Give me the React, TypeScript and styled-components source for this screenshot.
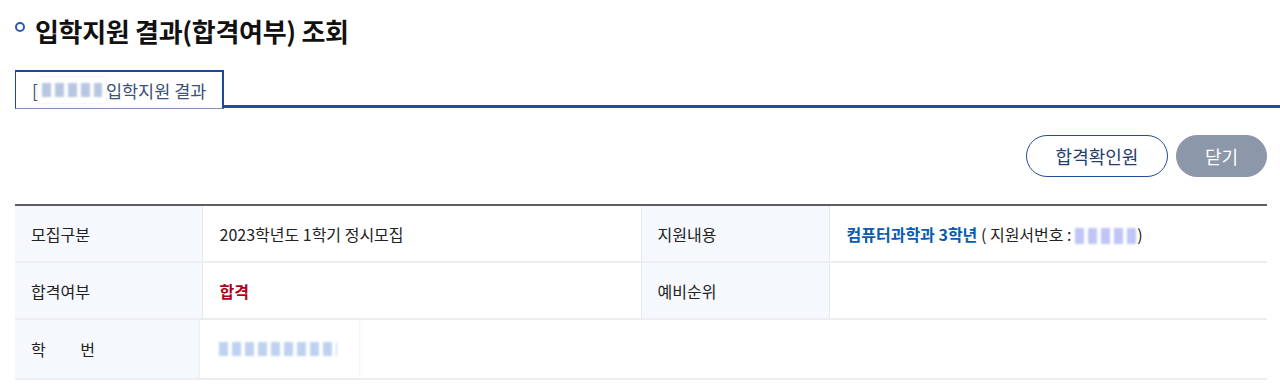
import styled, { createGlobalStyle } from "styled-components";

const GlobalStyle = createGlobalStyle`
  html, body { margin: 0; padding: 0; background: #fff; }
  body {
    font-family: "Noto Sans CJK KR", "Noto Sans", sans-serif;
    color: #222;
  }
`;

/* ── Layout ──────────────────────────────────────────── */

const Page = styled.div`
  padding: 0 13px 0 15px;
  overflow: hidden;
`;

const TitleRow = styled.div`
  display: flex;
  align-items: center;
  gap: 10px;
  height: 60px;
  margin-bottom: 10px;
`;

const Bullet = styled.span`
  width: 6px;
  height: 6px;
  border: 2px solid #2a5bb0;
  border-radius: 50%;
  margin-left: 0;
  margin-top: -6px;
`;

const Title = styled.h2`
  margin: 0;
  font-size: 26px;
  font-weight: 700;
  letter-spacing: -0.3px;
  color: #111;
`;

/* ── Tabs ────────────────────────────────────────────── */

const TabBar = styled.div`
  display: flex;
  align-items: flex-end;
  margin-right: -13px;
`;

const Tab = styled.div`
  width: 209px;
  height: 39px;
  box-sizing: border-box;
  border: 2px solid #1c4a95;
  border-left-width: 1.5px;
  border-bottom: 1px solid #7e93b8;
  display: flex;
  align-items: center;
  padding-left: 16px;
  margin-bottom: -1px;
  font-size: 17.5px;
  color: #3a5278;
  background: #fff;
`;

const TabLine = styled.div`
  flex: 1;
  height: 3px;
  background: #1e4f9c;
`;

const Blur = styled.span<{ $w: number; $h: number; $c: string }>`
  display: inline-block;
  width: ${(p) => p.$w}px;
  height: ${(p) => p.$h}px;
  vertical-align: middle;
  background:
    repeating-linear-gradient(90deg, ${(p) => p.$c} 0 9px, rgba(255,255,255,0.55) 9px 13px);
  opacity: 0.75;
  filter: blur(1.2px);
`;

const TabBlurWrap = styled.span`
  display: inline-flex;
  align-items: center;
  justify-content: center;
  width: 68px;
  height: 26px;
  background: #fff;
  box-shadow: 0 0 2px rgba(200, 210, 230, 0.6);
`;

/* ── Buttons ─────────────────────────────────────────── */

const ButtonRow = styled.div`
  display: flex;
  justify-content: flex-end;
  gap: 8px;
  margin-top: 27px;
  margin-bottom: 27px;
`;

const PillButton = styled.button<{ $variant: "outline" | "gray" }>`
  height: 42px;
  border-radius: 21px;
  font-family: inherit;
  font-size: 18px;
  cursor: pointer;
  padding: 0;
  width: ${(p) => (p.$variant === "outline" ? "142px" : "91px")};
  border: 1px solid ${(p) => (p.$variant === "outline" ? "#1f4f96" : "#8c97aa")};
  background: ${(p) => (p.$variant === "outline" ? "#fff" : "#8c97aa")};
  color: ${(p) => (p.$variant === "outline" ? "#1f3e70" : "#fff")};
`;

/* ── Table ───────────────────────────────────────────── */

const InfoTable = styled.table`
  width: 100%;
  border-collapse: collapse;
  border-top: 2px solid #5e5e5e;
  table-layout: fixed;
  font-size: 16px;
`;

const Row = styled.tr`
  height: 57px;
  border-bottom: 2px solid #eceef1;
`;

const Th = styled.th`
  background: #f5f8fd;
  font-weight: 400;
  text-align: left;
  padding: 0 16px;
  color: #222;
  border-right: 1px solid #e4e8ef;
  border-left: 1px solid #e4e8ef;
  &:first-child { border-left: none; }
`;

const Td = styled.td`
  padding: 0 17px;
  color: #222;
`;

const Pass = styled.span`
  color: #b0001a;
  font-weight: 700;
`;

const Major = styled.span`
  color: #0b5aad;
  font-weight: 700;
`;

const Spread = styled.span`
  display: inline-flex;
  justify-content: space-between;
  width: 64px;
`;

const IdBlurWrap = styled.span`
  display: inline-flex;
  align-items: center;
  width: 140px;
  height: 58px;
  margin-left: -20px;
  padding-left: 19px;
  background: #fff;
  box-shadow: 0 0 3px rgba(230, 230, 235, 0.9);
`;

export default function App() {
  return (
    <>
      <GlobalStyle />
      <Page>
        <TitleRow>
          <Bullet />
          <Title>입학지원 결과(합격여부) 조회</Title>
        </TitleRow>

        <TabBar>
          <Tab>
            [
            <TabBlurWrap>
              <Blur $w={60} $h={14} $c="#9fb3d8" />
            </TabBlurWrap>
            입학지원 결과
          </Tab>
          <TabLine />
        </TabBar>

        <ButtonRow>
          <PillButton $variant="outline">합격확인원</PillButton>
          <PillButton $variant="gray">닫기</PillButton>
        </ButtonRow>

        <InfoTable>
          <colgroup>
            <col style={{ width: 187 }} />
            <col style={{ width: 439 }} />
            <col style={{ width: 188 }} />
            <col />
          </colgroup>
          <tbody>
            <Row>
              <Th>모집구분</Th>
              <Td>2023학년도 1학기 정시모집</Td>
              <Th>지원내용</Th>
              <Td>
                <Major>컴퓨터과학과 3학년</Major> ( 지원서번호 :{" "}
                <Blur $w={62} $h={16} $c="#aab2f2" />)
              </Td>
            </Row>
            <Row>
              <Th>합격여부</Th>
              <Td>
                <Pass>합격</Pass>
              </Td>
              <Th>예비순위</Th>
              <Td />
            </Row>
            <Row>
              <Th>
                <Spread>
                  <span>학</span>
                  <span>번</span>
                </Spread>
              </Th>
              <Td colSpan={3}>
                <IdBlurWrap>
                  <Blur $w={118} $h={14} $c="#a9c4ec" />
                </IdBlurWrap>
              </Td>
            </Row>
          </tbody>
        </InfoTable>
      </Page>
    </>
  );
}
